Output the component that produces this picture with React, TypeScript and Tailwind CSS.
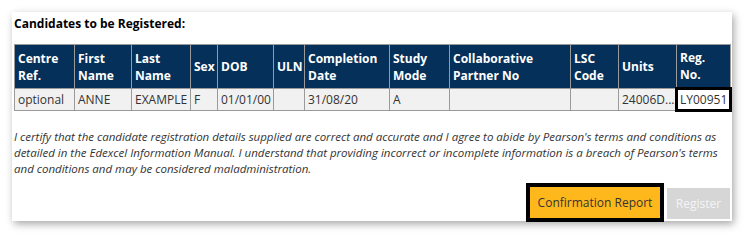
import React from 'react';

const columns: Array<{ label: string[]; width: number }> = [
  { label: ['Centre', 'Ref.'], width: 60 },
  { label: ['First', 'Name'], width: 57 },
  { label: ['Last', 'Name'], width: 59 },
  { label: ['Sex'], width: 27 },
  { label: ['DOB'], width: 56 },
  { label: ['ULN'], width: 31 },
  { label: ['Completion', 'Date'], width: 85 },
  { label: ['Study', 'Mode'], width: 60 },
  { label: ['Collaborative', 'Partner No'], width: 121 },
  { label: ['LSC', 'Code'], width: 48 },
  { label: ['Units'], width: 58 },
  { label: ['Reg.', 'No.'], width: 54 },
];

const row = ['optional', 'ANNE', 'EXAMPLE', 'F', '01/01/00', '', '31/08/20', 'A', '', '', '24006D...'];

export default function App() {
  return (
    <div className="w-[750px] h-[239px] bg-white p-[12px] font-['Open_Sans',sans-serif] text-[#333]">
      <div className="w-[720px] bg-white shadow-[2px_3px_8px_rgba(0,0,0,0.35)] px-[2px] pt-[3px] pb-[2px]">
        <div className="text-[12px] leading-[18px] font-bold text-black">Candidates to be Registered:</div>

        <table className="mt-[11px] w-[716px] table-fixed border-collapse text-[12px]">
          <colgroup>
            {columns.map((c, i) => (
              <col key={i} style={{ width: c.width }} />
            ))}
          </colgroup>
          <thead>
            <tr className="bg-[#05305a]">
              {columns.map((c, i) => (
                <th
                  key={i}
                  className="border border-[#9a9a9a] px-[3px] py-[4px] text-left align-middle font-bold leading-[17px] text-white"
                >
                  {c.label.map((l, j) => (
                    <div key={j} className="whitespace-nowrap">{l}</div>
                  ))}
                </th>
              ))}
            </tr>
          </thead>
          <tbody>
            <tr className="bg-[#f1f1f1]">
              {row.map((v, i) => (
                <td
                  key={i}
                  className="border border-[#9a9a9a] px-[3px] py-[2px] leading-[17px] whitespace-nowrap overflow-hidden"
                >
                  {v}
                </td>
              ))}
              <td className="border-[3px] border-black bg-white px-[2px] py-[1px] leading-[17px] whitespace-nowrap overflow-hidden">
                LY00951
              </td>
            </tr>
          </tbody>
        </table>

        <p className="mt-[17px] text-[11.5px] leading-[16px] italic text-[#333]">
          I certify that the candidate registration details supplied are correct and accurate and I agree to abide by
          Pearson's terms and conditions as detailed in the Edexcel Information Manual. I understand that providing
          incorrect or incomplete information is a breach of Pearson's terms and conditions and may be considered
          maladministration.
        </p>

        <div className="mt-[10px] flex justify-end items-end gap-[7px]">
          <button className="h-[31px] w-[130px] bg-[#ffb81c] text-[12px] text-[#333] outline-[4px] outline-solid outline-black mb-[1px]">
            Confirmation Report
          </button>
          <button className="h-[31px] w-[63px] bg-[#d6d6d6] text-[12px] text-[#f4f4f4]">Register</button>
        </div>
      </div>
    </div>
  );
}
